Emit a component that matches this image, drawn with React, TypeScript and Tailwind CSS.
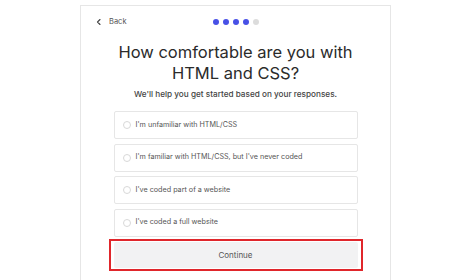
import React from "react";

const options = [
  "I'm unfamiliar with HTML/CSS",
  "I'm familiar with HTML/CSS, but I've never coded",
  "I've coded part of a website",
  "I've coded a full website",
];

export default function App() {
  return (
    <div className="w-[474px] h-[280px] overflow-hidden bg-white" style={{ fontFamily: "Inter, 'Noto Sans', sans-serif" }}>
      <div className="ml-[80px] mt-[5px] w-[311px] h-[300px] border border-[#e6e6e6] bg-white">
        <div className="grid grid-cols-[1fr_auto_1fr] items-center h-[30px] pt-[1px]">
          <div className="flex items-center pl-[14px] gap-[6px] text-[#555] text-[7.5px]">
            <svg width="8" height="8" viewBox="0 0 8 8" fill="none">
              <path d="M5 1.5L2.5 4L5 6.5" stroke="#444" strokeWidth="1.1" strokeLinecap="round" strokeLinejoin="round" />
            </svg>
            <span>Back</span>
          </div>
          <div className="flex items-center gap-[4px]">
            <span className="w-[6px] h-[6px] rounded-full bg-[#4750e6]" />
            <span className="w-[6px] h-[6px] rounded-full bg-[#4750e6]" />
            <span className="w-[6px] h-[6px] rounded-full bg-[#4750e6]" />
            <span className="w-[6px] h-[6px] rounded-full bg-[#4750e6]" />
            <span className="w-[6px] h-[6px] rounded-full bg-[#dcdcdc]" />
          </div>
          <div />
        </div>
        <h1 className="mt-[6px] text-center text-[16.5px] leading-[21px] text-[#2b2b2b] font-normal">
          How comfortable are you with
          <br />
          HTML and CSS?
        </h1>
        <p className="mt-[4px] text-center text-[8.2px] leading-[12px] font-medium text-[#444]">
          We'll help you get started based on your responses.
        </p>
        <div className="mt-[11px] flex flex-col items-center gap-[4.5px]">
          {options.map((o) => (
            <div key={o} className="w-[244px] h-[28px] border border-[#e6e6e6] rounded-[2px] flex items-center pl-[8px] gap-[5px] text-[7.2px] text-[#555]">
              <span className="w-[8px] h-[8px] rounded-full border border-[#d8d8d8]" />
              <span>{o}</span>
            </div>
          ))}
        </div>
        <div className="mt-[2px] mx-auto w-[254px] border-2 border-[#e0262b] py-[1px] px-[3px]">
          <div className="h-[26px] bg-[#f2f2f3] rounded-[2px] flex items-center justify-center text-[8px] text-[#555]">
            Continue
          </div>
        </div>
      </div>
    </div>
  );
}
